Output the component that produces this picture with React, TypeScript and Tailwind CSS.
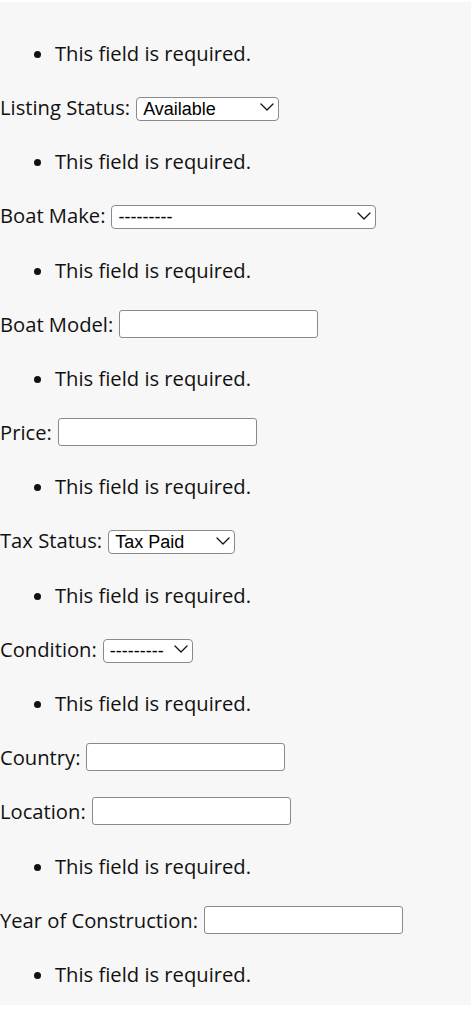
import React from 'react';

type Field =
  | { kind: 'error' }
  | { kind: 'select'; label: string; value: string; width: string }
  | { kind: 'input'; label: string };

const fields: Field[] = [
  { kind: 'error' },
  { kind: 'select', label: 'Listing Status:', value: 'Available', width: 'w-[143px]' },
  { kind: 'error' },
  { kind: 'select', label: 'Boat Make:', value: '---------', width: 'w-[265px]' },
  { kind: 'error' },
  { kind: 'input', label: 'Boat Model:' },
  { kind: 'error' },
  { kind: 'input', label: 'Price:' },
  { kind: 'error' },
  { kind: 'select', label: 'Tax Status:', value: 'Tax Paid', width: 'w-[127px]' },
  { kind: 'error' },
  { kind: 'select', label: 'Condition:', value: '---------', width: 'w-[90px]' },
  { kind: 'error' },
  { kind: 'input', label: 'Country:' },
  { kind: 'input', label: 'Location:' },
  { kind: 'error' },
  { kind: 'input', label: 'Year of Construction:' },
  { kind: 'error' },
];

const Chevron = () => (
  <svg
    className="pointer-events-none absolute right-[5px] top-1/2 -translate-y-1/2"
    width="14"
    height="8"
    viewBox="0 0 14 8"
    fill="none"
  >
    <path d="M1 1l6 6 6-6" stroke="#111" strokeWidth="1.3" strokeLinecap="round" strokeLinejoin="round" />
  </svg>
);

const ErrorList = () => (
  <ul className="ml-[55px] list-disc">
    <li className="marker:text-[#111]">This field is required.</li>
  </ul>
);

const App: React.FC = () => {
  return (
    <div className="min-h-[1009px] bg-white pt-[2px]">
      <form
        className="h-[1003px] w-[471px] bg-[#f7f7f7] pt-[24px] text-[20.2px] text-[#111]"
        style={{ fontFamily: '"Open Sans", "Liberation Sans", sans-serif' }}
      >
        {fields.map((f, i) => (
          <div key={i} className="flex h-[54.18px] items-center">
            {f.kind === 'error' && <ErrorList />}
            {f.kind === 'select' && (
              <label className="flex items-center gap-[6px] whitespace-nowrap">
                <span>{f.label}</span>
                <span className={`relative inline-block ${f.width}`}>
                  <select
                    defaultValue={f.value}
                    className="h-[24px] w-full appearance-none rounded-[4px] border border-[#8a8a8a] bg-white pl-[6px] pr-[20px] text-[18px] leading-none text-black"
                    style={{ fontFamily: '"Liberation Sans", Arial, sans-serif' }}
                  >
                    <option>{f.value}</option>
                  </select>
                  <Chevron />
                </span>
              </label>
            )}
            {f.kind === 'input' && (
              <label className="flex items-center gap-[6px] whitespace-nowrap">
                <span>{f.label}</span>
                <input
                  type="text"
                  className="h-[28px] w-[199px] rounded-[3px] border border-[#8a8a8a] bg-white px-[4px] text-[17px]"
                />
              </label>
            )}
          </div>
        ))}
      </form>
    </div>
  );
};

export default App;
